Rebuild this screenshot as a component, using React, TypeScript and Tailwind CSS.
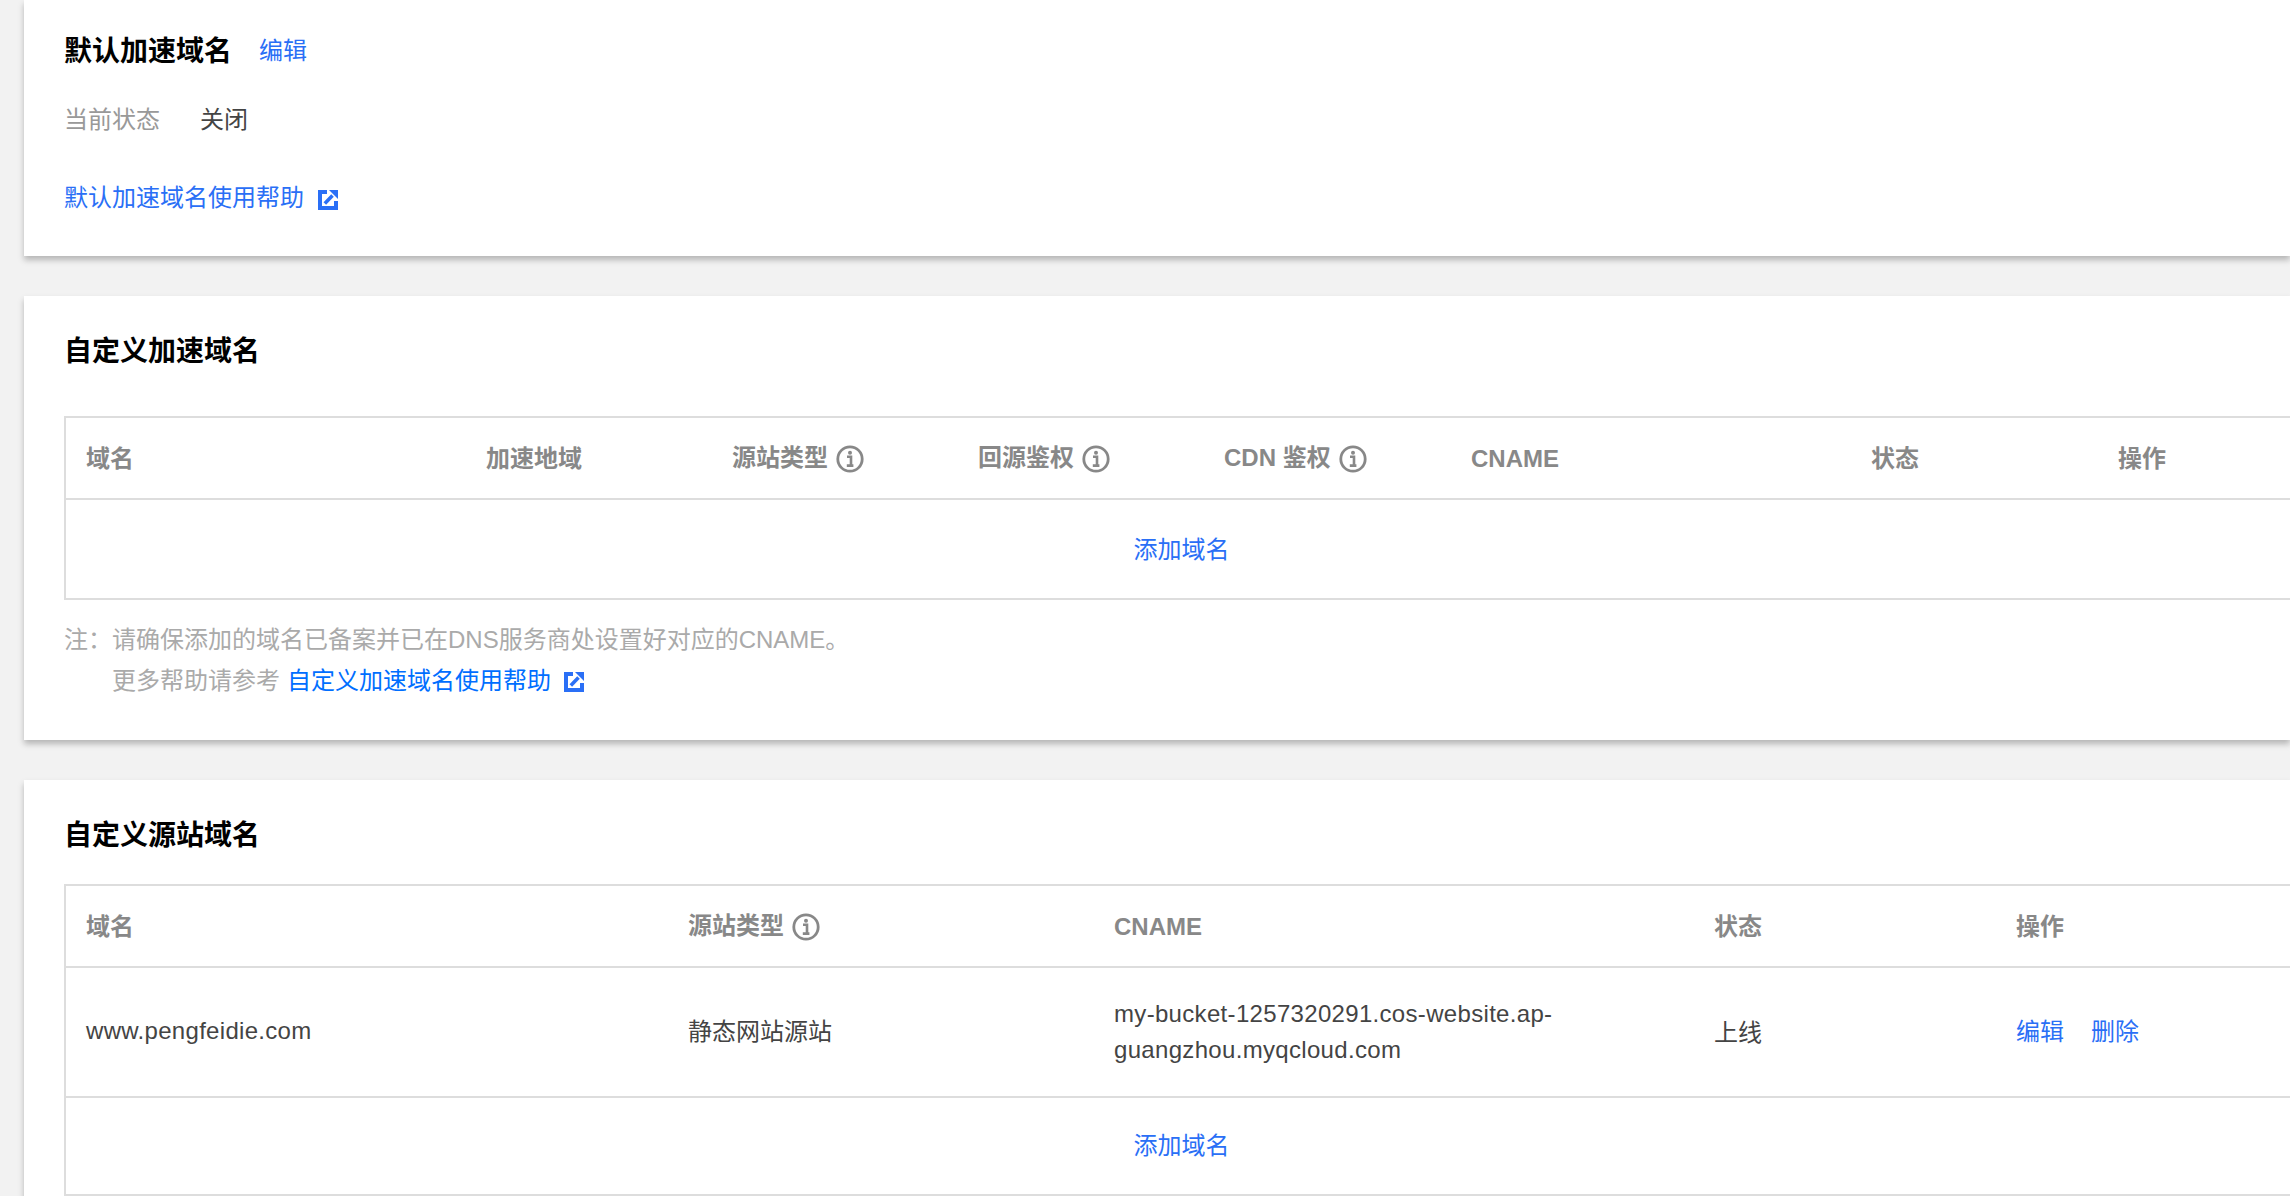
import React from "react";

const BLUE = "text-[#2a6ff6]";

function InfoIcon() {
  return (
    <svg width="28" height="28" viewBox="0 0 28 28" fill="none" className="ml-[8px] shrink-0">
      <circle cx="14" cy="14" r="12.2" stroke="#888888" strokeWidth="2.8" />
      <circle cx="14" cy="7.8" r="2" fill="#888888" />
      <path d="M11 11.8H15V20.6M10.8 20.6H17.4" stroke="#888888" strokeWidth="2.6" />
    </svg>
  );
}

function LinkIcon() {
  return (
    <svg width="20" height="20" viewBox="0 0 20 20" className="shrink-0">
      <path d="M0 0H9V4H4V16H16V11H20V20H0Z" fill="#2a6ff6" />
      <path d="M11 0H20V9Z" fill="#2a6ff6" />
      <path d="M6.8 13.4L14.5 5.6" stroke="#2a6ff6" strokeWidth="3.6" fill="none" />
    </svg>
  );
}

function Head({ label, info }: { label: string; info?: boolean }) {
  return (
    <div className="flex items-center pl-5 pt-[2px] font-bold text-[#888888] whitespace-pre">
      <span className={info ? "mb-[3px]" : ""}>{label}</span>
      {info && <InfoIcon />}
    </div>
  );
}

function AddRow({ height, shift }: { height: string; shift?: string }) {
  return (
    <div className={`flex items-center justify-center ${height} ${shift ?? ""} ${BLUE}`}>
      <a className="ml-[1px]">添加域名</a>
    </div>
  );
}

export default function App() {
  return (
    <div
      className="h-[1196px] w-[2290px] overflow-hidden bg-[#f2f2f2] pl-6 text-[24px] leading-[40px] text-[#444444]"
      style={{ fontFamily: '"Liberation Sans", "Noto Sans CJK SC", sans-serif' }}
    >
      <div className="flex flex-col gap-10">
        <section className="h-[256px] bg-white pl-10 pt-[30px] shadow-[0_4px_6px_rgba(0,0,0,0.25)]">
          <div className="flex items-center">
            <h2 className="pt-[2px] text-[28px] font-bold text-black">默认加速域名</h2>
            <a className={`ml-[27px] ${BLUE}`}>编辑</a>
          </div>
          <div className="mt-[28px] flex">
            <span className="w-[136px] text-[#999999]">当前状态</span>
            <span>关闭</span>
          </div>
          <div className={`mt-[38px] flex items-center ${BLUE}`}>
            <a>默认加速域名使用帮助</a>
            <span className="ml-[14px] mt-[4px]"><LinkIcon /></span>
          </div>
        </section>

        <section className="h-[444px] bg-white pl-10 pt-[34px] shadow-[0_4px_6px_rgba(0,0,0,0.25)]">
          <h2 className="pt-[2px] text-[28px] font-bold text-black">自定义加速域名</h2>
          <div className="mt-[44px] w-[2234px] border-2 border-[#dddddd]">
            <div className="grid h-[82px] grid-cols-[400px_246px_246px_246px_247px_400px_247px_1fr] border-b-2 border-[#dddddd]">
              <Head label="域名" />
              <Head label="加速地域" />
              <Head label="源站类型" info />
              <Head label="回源鉴权" info />
              <Head label="CDN 鉴权" info />
              <Head label="CNAME" />
              <Head label="状态" />
              <Head label="操作" />
            </div>
            <AddRow height="h-[98px]" shift="pt-[2px]" />
          </div>
          <div className="mt-[19px] flex leading-[41px] text-[#aaaaaa]">
            <span className="w-[48px] shrink-0">注：</span>
            <div>
              <div>请确保添加的域名已备案并已在DNS服务商处设置好对应的CNAME。</div>
              <div className="flex items-center">
                <span className="w-[176px]">更多帮助请参考</span>
                <a className="-ml-[1px] text-[#006eff]">自定义加速域名使用帮助</a>
                <span className="ml-[13px] mt-[2px]"><LinkIcon /></span>
              </div>
            </div>
          </div>
        </section>

        <section className="h-[500px] bg-white pl-10 pt-[34px] shadow-[0_4px_6px_rgba(0,0,0,0.25)]">
          <h2 className="pt-[2px] text-[28px] font-bold text-black">自定义源站域名</h2>
          <div className="mt-[28px] w-[2234px] border-2 border-[#dddddd]">
            <div className="grid h-[82px] grid-cols-[602px_426px_600px_302px_1fr] border-b-2 border-[#dddddd]">
              <Head label="域名" />
              <Head label="源站类型" info />
              <Head label="CNAME" />
              <Head label="状态" />
              <Head label="操作" />
            </div>
            <div className="grid h-[130px] grid-cols-[602px_426px_600px_302px_1fr] items-center border-b-2 border-[#dddddd]">
              <div className="mb-[2px] pl-5 tracking-[0.3px]">www.pengfeidie.com</div>
              <div className="pl-5">静态网站源站</div>
              <div className="w-[480px] pl-5 leading-[36px] tracking-[0.32px]">my-bucket-1257320291.cos-website.ap-guangzhou.myqcloud.com</div>
              <div className="mt-[2px] pl-5">上线</div>
              <div className={`flex gap-[27px] pl-5 ${BLUE}`}>
                <a>编辑</a>
                <a>删除</a>
              </div>
            </div>
            <AddRow height="h-[96px]" />
          </div>
        </section>
      </div>
    </div>
  );
}
